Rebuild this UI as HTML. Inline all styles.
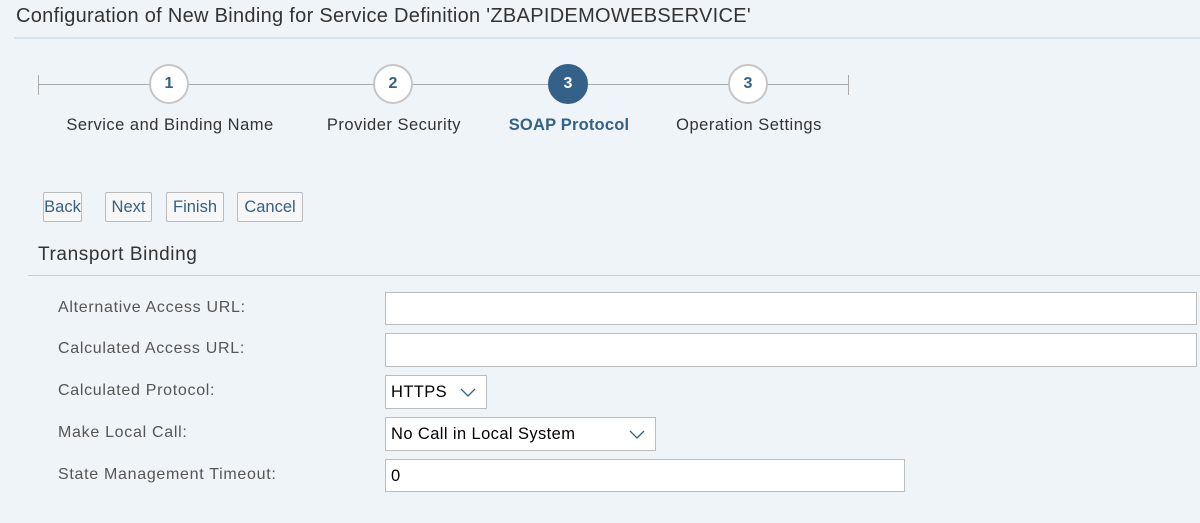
<!DOCTYPE html>
<html><head><style>
body{margin:0;width:1200px;height:523px;background:#eff4f9;font-family:"Liberation Sans",sans-serif;position:relative;overflow:hidden}
.a{position:absolute}
.c{position:absolute;width:40px;height:40px;border:2px solid #c6c6c6;border-radius:50%;background:#fff;box-sizing:border-box;text-align:center;line-height:36px;font-weight:bold;color:#346187;font-size:16px;top:64px}
.sl{position:absolute;top:116px;font-size:16.5px;letter-spacing:0.5px;color:#333;white-space:nowrap;transform:translateX(-50%)}
.b{position:absolute;top:192px;height:30px;border:1px solid #bbb;border-radius:2px;background:#f7f7f7;color:#346187;font-size:16.5px;line-height:28px;text-align:center;box-sizing:border-box}
.l{position:absolute;left:58px;font-size:16px;letter-spacing:0.7px;color:#555}
.i{position:absolute;left:385px;background:#fff;border:1px solid #bcbcbc;box-sizing:border-box;font-size:16.5px;letter-spacing:0.4px;color:#000;padding-left:5px;line-height:32px}
.ch{position:absolute;right:10px;top:10px}
</style></head><body>
<div class="a" style="left:16px;top:5px;font-size:20px;letter-spacing:0.3px;color:#333">Configuration of New Binding for Service Definition 'ZBAPIDEMOWEBSERVICE'</div>
<div class="a" style="left:14px;top:37px;width:1186px;height:2px;background:#d7e3ef"></div>
<div class="a" style="left:38px;top:84px;width:810px;height:1px;background:#aaa"></div>
<div class="a" style="left:38px;top:75px;width:1px;height:20px;background:#aaa"></div>
<div class="a" style="left:848px;top:75px;width:1px;height:20px;background:#aaa"></div>
<div class="c" style="left:149px">1</div>
<div class="c" style="left:373px">2</div>
<div class="c" style="left:548px;background:#346187;border-color:#346187;color:#fff">3</div>
<div class="c" style="left:728px">3</div>
<div class="sl" style="left:170px">Service and Binding Name</div>
<div class="sl" style="left:394px">Provider Security</div>
<div class="sl" style="left:569px;color:#346187;font-weight:bold;letter-spacing:0.2px">SOAP Protocol</div>
<div class="sl" style="left:749px">Operation Settings</div>
<div class="b" style="left:43px;width:39px">Back</div>
<div class="b" style="left:105px;width:47px">Next</div>
<div class="b" style="left:166px;width:58px">Finish</div>
<div class="b" style="left:237px;width:66px">Cancel</div>
<div class="a" style="left:38px;top:244px;font-size:19px;letter-spacing:0.6px;color:#333">Transport Binding</div>
<div class="a" style="left:28px;top:275px;width:1172px;height:1px;background:#ccc"></div>
<div class="l" style="top:299px">Alternative Access URL:</div>
<div class="l" style="top:340px">Calculated Access URL:</div>
<div class="l" style="top:382px">Calculated Protocol:</div>
<div class="l" style="top:424px">Make Local Call:</div>
<div class="l" style="top:466px">State Management Timeout:</div>
<div class="i" style="top:292px;width:812px;height:33px"></div>
<div class="i" style="top:333px;width:812px;height:34px"></div>
<div class="i" style="top:375px;width:102px;height:34px">HTTPS<svg class="ch" width="16" height="12" viewBox="0 0 16 12"><path d="M1 3l7 7 7-7" fill="none" stroke="#346187" stroke-width="1.3"/></svg></div>
<div class="i" style="top:417px;width:271px;height:34px">No Call in Local System<svg class="ch" width="16" height="12" viewBox="0 0 16 12"><path d="M1 3l7 7 7-7" fill="none" stroke="#346187" stroke-width="1.3"/></svg></div>
<div class="i" style="top:459px;width:520px;height:33px">0</div>
</body></html>
